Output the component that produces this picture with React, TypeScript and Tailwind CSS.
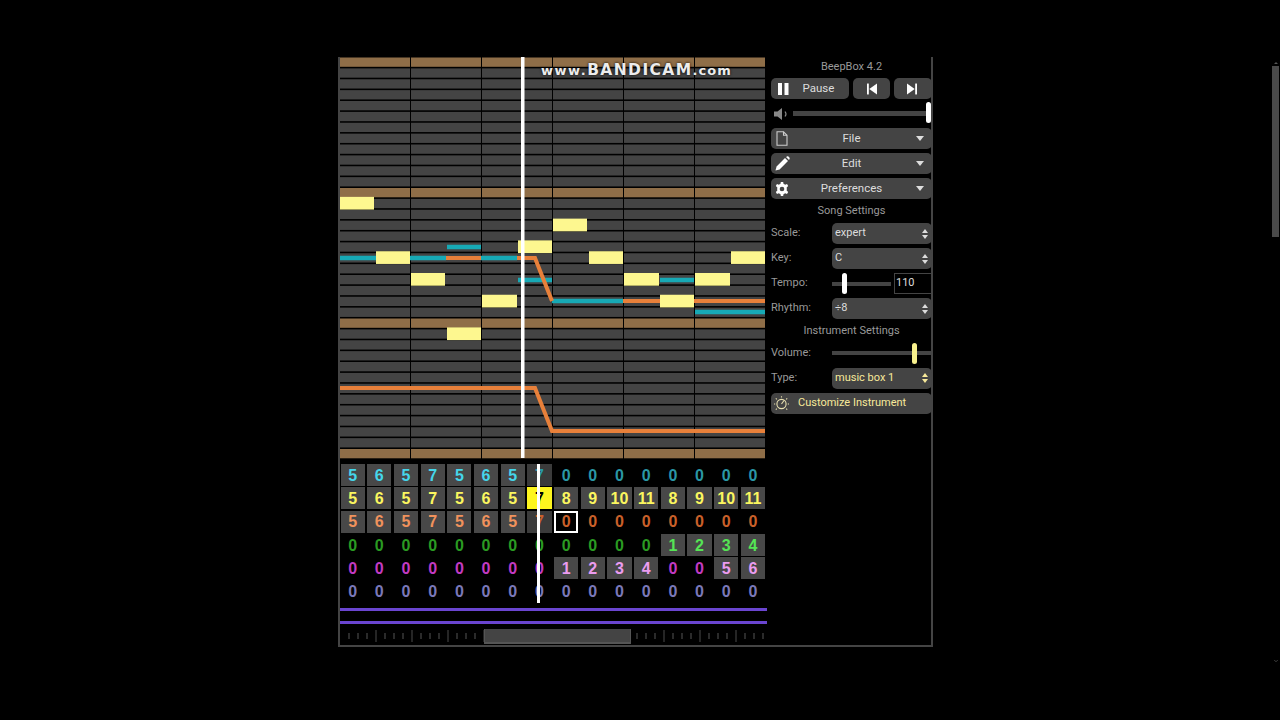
import { ChevronDown } from "lucide-react";

const ROW = 10.875;
const rowY = (n: number) => 57 + n * ROW;

// yellow notes: [x1, x2, row]
const yellowNotes = [
  [340, 374, 13],
  [376, 410, 18],
  [411, 445, 20],
  [447, 481, 25],
  [482, 517, 22],
  [518, 552, 17],
  [553, 587, 15],
  [589, 623, 18],
  [624, 659, 20],
  [660, 694, 22],
  [695, 730, 20],
  [731, 765, 18],
];

const teal = [
  "M340 258H376",
  "M410 258H446",
  "M447 247H481",
  "M481 258H517",
  "M518 280H552",
  "M552 301H623",
  "M660 280H694",
  "M695 312H765",
];

const orange = [
  "M446 258H481",
  "M517 258H535L552 301H552",
  "M623 301H660",
  "M694 301H765",
  "M340 388H535L552 431H765",
];

function PianoRoll() {
  const columns = [340, 411, 482, 553, 624, 695];
  const rows = Array.from({ length: 37 }, (_, i) => i);
  return (
    <svg width="427" height="402" viewBox="340 57 427 402" className="block">
      {rows.map((r) =>
        columns.map((x) => (
          <rect
            key={`${r}-${x}`}
            x={x}
            y={rowY(r) + 0.5}
            width="70"
            height="9.3"
            fill={r % 12 === 0 ? "#8f6e48" : "#444444"}
          />
        ))
      )}
      <g stroke="#17a9b5" strokeWidth="4.5" fill="none">
        {teal.map((d) => (
          <path key={d} d={d} />
        ))}
      </g>
      <g stroke="#e8803a" strokeWidth="4" fill="none">
        {orange.map((d) => (
          <path key={d} d={d} />
        ))}
      </g>
      {yellowNotes.map(([a, b, r]) => (
        <rect key={`${a}-${r}`} x={a} y={rowY(r) - 1.5} width={b - a} height="12.7" fill="#fdf78f" />
      ))}
      <rect x="521" y="57" width="3.5" height="401" fill="#ffffff" />
    </svg>
  );
}

type Cell = { v: number; on?: boolean };
const c = (list: number[]) => list.map((v) => ({ v, on: v !== 0 }));

const tracks: { dim: string; bright: string; cells: Cell[] }[] = [
  { dim: "text-[#2a97a5]", bright: "text-[#45d6ea]", cells: c([5, 6, 5, 7, 5, 6, 5, 7, 0, 0, 0, 0, 0, 0, 0, 0]) },
  { dim: "text-[#f5f05f]", bright: "text-[#fbf65f]", cells: c([5, 6, 5, 7, 5, 6, 5, 7, 8, 9, 10, 11, 8, 9, 10, 11]) },
  { dim: "text-[#c9602a]", bright: "text-[#f0925c]", cells: c([5, 6, 5, 7, 5, 6, 5, 7, 0, 0, 0, 0, 0, 0, 0, 0]) },
  { dim: "text-[#2a9a22]", bright: "text-[#55e455]", cells: c([0, 0, 0, 0, 0, 0, 0, 0, 0, 0, 0, 0, 1, 2, 3, 4]) },
  { dim: "text-[#c23ac2]", bright: "text-[#eb9cf0]", cells: c([0, 0, 0, 0, 0, 0, 0, 0, 1, 2, 3, 4, 0, 0, 5, 6]) },
  { dim: "text-[#7a78b8]", bright: "text-[#7a78b8]", cells: c([0, 0, 0, 0, 0, 0, 0, 0, 0, 0, 0, 0, 0, 0, 0, 0]) },
];

function cellClass(t: number, i: number, cell: Cell, dim: string, bright: string) {
  if (t === 1 && i === 7) return "bg-[#fdf51e] text-black";
  // the cell under the playhead is still fading in the video frame
  if ((t === 0 || t === 2) && i === 7) return "bg-[#3b3b3b] " + dim;
  if (t === 2 && i === 8) return "border-2 border-white " + dim;
  return cell.on ? "bg-[#484848] " + bright : dim;
}

function TrackGrid() {
  return (
    <div className="relative grid h-[140px] w-[427px] grid-cols-[repeat(16,minmax(0,1fr))] grid-rows-6 font-['Liberation_Sans',sans-serif] text-base font-bold">
      {tracks.map((track, t) =>
        track.cells.map((cell, i) => (
          <div key={`${t}-${i}`} className="pb-[1.5px] pl-[0.5px] pr-[2px]">
            <div className={"flex h-full w-full items-center justify-center pt-[1.5px] " + cellClass(t, i, cell, track.dim, track.bright)}>
              {cell.v}
            </div>
          </div>
        ))
      )}
      {/* playhead over the pattern grid */}
      <div className="absolute bottom-[1px] left-[196.5px] top-0 w-[3px] bg-white" />
    </div>
  );
}

function BarScroll() {
  const ticks = Array.from({ length: 48 }, (_, i) => i);
  return (
    <div className="relative mt-[4px] h-[17px] w-[427px]">
      <svg width="427" height="17" viewBox="0 0 427 17" className="block">
        {ticks.map((i) => {
          const x = 9 + i * 9;
          const major = (i + 1) % 4 === 0;
          return (
            <rect
              key={i}
              x={x - 0.5}
              y={major ? 2 : 5}
              width="1"
              height={major ? 12 : 6}
              fill={major ? "#4a4a4a" : "#555555"}
            />
          );
        })}
      </svg>
      <div className="absolute left-[144px] top-[1px] h-[15px] w-[147px] border-x border-b-2 border-[#555555] bg-[#444444]" />
    </div>
  );
}

function PatternEditor() {
  return (
    <div className="flex w-[427px] flex-col">
      <PianoRoll />
      <div className="mt-[5px]">
        <TrackGrid />
      </div>
      <div className="mt-[4px] h-[3px] bg-[#6a45d0]" />
      <div className="mt-[10px] h-[3px] bg-[#6a45d0]" />
      <BarScroll />
    </div>
  );
}

const btn = "flex h-[21px] items-center rounded-[5px] bg-[#444444] text-[#cccccc]";

function Arrow() {
  return <span className="h-0 w-0 border-x-[4px] border-t-[5px] border-x-transparent border-t-[#dddddd]" />;
}

function MenuButton({ label, icon }: { label: string; icon: React.ReactNode }) {
  return (
    <div className={btn + " relative justify-center text-[11.5px]"}>
      <span className="absolute left-[3px] flex h-[16px] w-[16px] items-center justify-center">{icon}</span>
      <span className="text-[#dddddd]">{label}</span>
      <span className="absolute right-[8px] flex"><Arrow /></span>
    </div>
  );
}

function Select({ value, yellow }: { value: string; yellow?: boolean }) {
  return (
    <div className={btn + " w-[100px] justify-between pl-[3px] pr-[4px] text-[11px] " + (yellow ? "text-[#f7e99a]" : "text-[#dddddd]")}>
      <span>{value}</span>
      <span className="flex flex-col gap-[2px]">
        <span className={"h-0 w-0 border-x-[3.5px] border-b-[4px] border-x-transparent " + (yellow ? "border-b-[#f7e99a]" : "border-b-[#dddddd]")} />
        <span className={"h-0 w-0 border-x-[3.5px] border-t-[4px] border-x-transparent " + (yellow ? "border-t-[#f7e99a]" : "border-t-[#dddddd]")} />
      </span>
    </div>
  );
}

function Row({ label, children }: { label: string; children: React.ReactNode }) {
  return (
    <div className="flex h-[25px] items-center justify-between text-[11px] text-[#999999]">
      <span>{label}</span>
      {children}
    </div>
  );
}

function Slider({ width, thumbLeft, yellow }: { width: string; thumbLeft: string; yellow?: boolean }) {
  return (
    <div className={"relative flex h-[21px] items-center " + width}>
      <div className="h-[4px] w-full bg-[#444444]" />
      <div className={"absolute top-0 h-[21px] w-[5px] rounded-[3px] " + thumbLeft + (yellow ? " bg-[#f7f08c]" : " bg-white")} />
    </div>
  );
}

function Sidebar() {
  return (
    <div className="flex w-[161px] flex-col font-['Roboto',sans-serif]">
      <div className="flex h-[21px] items-center justify-center text-[11px] text-[#999999]">BeepBox 4.2</div>
      <div className="flex gap-[4px]">
        <div className={btn + " relative w-[78px] justify-center pl-[17px] text-[11.5px] text-[#dddddd]"}>
          <svg className="absolute left-[7px]" width="11" height="12" viewBox="0 0 11 12" fill="#ffffff">
            <rect x="0" y="0" width="4" height="12" />
            <rect x="6.5" y="0" width="4" height="12" />
          </svg>
          Pause
        </div>
        <div className={btn + " w-[37px] justify-center"}>
          <svg width="10" height="12" viewBox="0 0 11 12" fill="#ffffff">
            <rect x="0" y="0" width="2" height="12" />
            <path d="M11 0V12L2.5 6Z" />
          </svg>
        </div>
        <div className={btn + " w-[38px] justify-center pr-[2px]"}>
          <svg width="10" height="12" viewBox="0 0 11 12" fill="#ffffff">
            <path d="M0 0V12L8.5 6Z" />
            <rect x="9" y="0" width="2" height="12" />
          </svg>
        </div>
      </div>
      <div className="relative mt-[4px] flex h-[21px] items-center gap-[3px] pl-[3px]">
        <svg width="16" height="14" viewBox="0 0 16 14" fill="none">
          <path d="M0 4.5H3.5L8 1V13L3.5 9.5H0Z" fill="#888888" />
          <path d="M11 4.5C12.2 6 12.2 8 11 9.5" stroke="#888888" strokeWidth="1.2" />
        </svg>
        <div className="h-[4.5px] w-[135px] bg-[#444444]" />
        <div className="absolute left-[155px] top-[-1px] h-[21px] w-[5px] rounded-[3px] bg-white" />
      </div>
      <div className="mt-[4px] flex flex-col gap-[4px]">
        <MenuButton
          label="File"
          icon={
            <svg width="12" height="15" viewBox="0 0 12 15" fill="none" stroke="#cccccc" strokeWidth="1.1">
              <path d="M1 .8H7.5L11 4.3V14.2H1Z" />
              <path d="M7.5 .8V4.3H11" />
            </svg>
          }
        />
        <MenuButton
          label="Edit"
          icon={
            <svg width="15" height="15" viewBox="0 0 15 15" fill="#ffffff">
              <path d="M0.5 14.5L1.6 10.4L10 2L13 5L4.6 13.4Z" />
              <path d="M11 1L12 0.4C12.5 0.2 13 0.2 13.4 0.6L14.4 1.6C14.8 2 14.8 2.5 14.6 3L14 4Z" />
            </svg>
          }
        />
        <MenuButton
          label="Preferences"
          icon={
            <svg width="14" height="14" viewBox="0 0 24 24" fill="#ffffff">
              <path
                fillRule="evenodd"
                d="M10 0H14L14.7 3.4C15.7 3.7 16.6 4.2 17.4 4.8L20.6 3.5L22.6 7L20 9.3C20.2 10.3 20.2 11.3 20.2 12C20.2 12.7 20.2 13.7 20 14.7L22.6 17L20.6 20.5L17.4 19.2C16.6 19.8 15.7 20.3 14.7 20.6L14 24H10L9.3 20.6C8.3 20.3 7.4 19.8 6.6 19.2L3.4 20.5L1.4 17L4 14.7C3.8 13.7 3.8 12.7 3.8 12C3.8 11.3 3.8 10.3 4 9.3L1.4 7L3.4 3.5L6.6 4.8C7.4 4.2 8.3 3.7 9.3 3.4ZM12 8A4 4 0 1 0 12 16A4 4 0 1 0 12 8Z"
              />
            </svg>
          }
        />
      </div>
      <div className="mt-[2px] flex h-[20px] items-center justify-center text-[11px] text-[#999999]">Song Settings</div>
      <div className="flex flex-col">
        <Row label="Scale:"><Select value="expert" /></Row>
        <Row label="Key:"><Select value="C" /></Row>
        <Row label="Tempo:">
          <div className="flex w-[100px] items-center justify-between">
            <Slider width="w-[59px]" thumbLeft="left-[10px]" />
            <div className="flex h-[21px] w-[38px] items-center border border-[#444444] pl-[1px] text-[11px] text-[#dddddd]">110</div>
          </div>
        </Row>
        <Row label="Rhythm:"><Select value="÷8" /></Row>
      </div>
      <div className="flex h-[19.5px] items-center justify-center text-[11px] text-[#999999]">Instrument Settings</div>
      <div className="flex flex-col">
        <Row label="Volume:"><Slider width="w-[100px]" thumbLeft="left-[80px]" yellow /></Row>
        <Row label="Type:"><Select value="music box 1" yellow /></Row>
      </div>
      <div className={btn + " relative mt-[2px] justify-start pl-[27px] text-[11px] text-[#f7e99a]"}>
        <svg className="absolute left-[2px] top-[2px]" width="17" height="17" viewBox="0 0 17 17" fill="none" stroke="#e8e0b0" strokeWidth="1.1">
          <circle cx="8.5" cy="9" r="4.6" />
          <path d="M8.5 9L11 5.5" />
          <path d="M8.5 1.2V2.6M2.8 3.4L3.8 4.4M14.2 3.4L13.2 4.4M1 9H2.2M14.8 9H16M2.8 14.6L3.8 13.6M14.2 14.6L13.2 13.6" />
        </svg>
        Customize Instrument
      </div>
    </div>
  );
}

export default function App() {
  return (
    <div className="relative flex h-[720px] w-full overflow-hidden bg-black">
      <div className="ml-[338px] mt-[57px] flex h-[590px] w-[595px] gap-[4px] self-start border-x-2 border-b-2 border-[#444444]">
        <PatternEditor />
        <Sidebar />
      </div>
      {/* video watermark */}
      <div className="absolute left-[541px] top-[60px] whitespace-nowrap font-['DejaVu_Sans',sans-serif] font-bold leading-[20px] text-[#ececec] [text-shadow:0_0_3px_#000]">
        <span className="text-[13px] tracking-[1.5px]">www.</span>
        <span className="text-[15.5px] tracking-[1.4px]">BANDICAM</span>
        <span className="text-[13px] tracking-[1px]">.com</span>
      </div>
      {/* browser scrollbar */}
      <div className="absolute right-[1px] top-[62px] flex w-[7px] flex-col items-center">
        <span className="h-0 w-0 border-x-[2px] border-b-[2px] border-x-transparent border-b-[#555555]" />
        <div className="mt-[2px] h-[171px] w-[7px] bg-[#4a4a4a]" />
      </div>
      <div className="absolute bottom-[56px] right-[1px] flex text-[#555555]">
        <ChevronDown size={6} strokeWidth={3} />
      </div>
    </div>
  );
}
